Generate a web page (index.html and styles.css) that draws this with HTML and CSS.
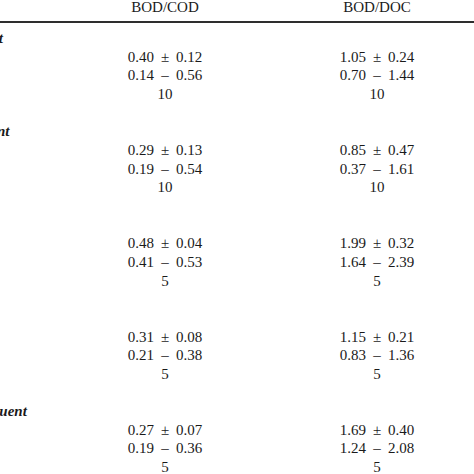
FILE: index.html
```html
<!DOCTYPE html>
<html>
<head>
<meta charset="utf-8">
<link rel="stylesheet" href="styles.css">
</head>
<body>
<div class="page">
  <div class="table">
    <div class="head">
      <div class="hcell"></div>
      <div class="hcell">BOD/COD</div>
      <div class="hcell">BOD/DOC</div>
    </div>
    <div class="body">
      <div class="group">
        <div class="label">Influent</div>
        <div class="spacer"></div>
        <div class="stat"><span>0.40</span><span class="sg">±</span><span>0.12</span><span>0.14</span><span class="sg">–</span><span>0.56</span><span class="n">10</span></div>
        <div class="stat"><span>1.05</span><span class="sg">±</span><span>0.24</span><span>0.70</span><span class="sg">–</span><span>1.44</span><span class="n">10</span></div>
      </div>
      <div class="group">
        <div class="label">Sediment</div>
        <div class="spacer"></div>
        <div class="stat"><span>0.29</span><span class="sg">±</span><span>0.13</span><span>0.19</span><span class="sg">–</span><span>0.54</span><span class="n">10</span></div>
        <div class="stat"><span>0.85</span><span class="sg">±</span><span>0.47</span><span>0.37</span><span class="sg">–</span><span>1.61</span><span class="n">10</span></div>
      </div>
      <div class="group">
        <div class="label">Pond</div>
        <div class="spacer"></div>
        <div class="stat"><span>0.48</span><span class="sg">±</span><span>0.04</span><span>0.41</span><span class="sg">–</span><span>0.53</span><span class="n">5</span></div>
        <div class="stat"><span>1.99</span><span class="sg">±</span><span>0.32</span><span>1.64</span><span class="sg">–</span><span>2.39</span><span class="n">5</span></div>
      </div>
      <div class="group">
        <div class="label">Tank</div>
        <div class="spacer"></div>
        <div class="stat"><span>0.31</span><span class="sg">±</span><span>0.08</span><span>0.21</span><span class="sg">–</span><span>0.38</span><span class="n">5</span></div>
        <div class="stat"><span>1.15</span><span class="sg">±</span><span>0.21</span><span>0.83</span><span class="sg">–</span><span>1.36</span><span class="n">5</span></div>
      </div>
      <div class="group">
        <div class="label">CW effluent</div>
        <div class="spacer"></div>
        <div class="stat"><span>0.27</span><span class="sg">±</span><span>0.07</span><span>0.19</span><span class="sg">–</span><span>0.36</span><span class="n">5</span></div>
        <div class="stat"><span>1.69</span><span class="sg">±</span><span>0.40</span><span>1.24</span><span class="sg">–</span><span>2.08</span><span class="n">5</span></div>
      </div>
    </div>
  </div>
</div>
</body>
</html>
```
FILE: styles.css
```css
html, body {
  margin: 0;
  padding: 0;
  background: #ffffff;
}
.page {
  width: 474px;
  height: 474px;
  overflow: hidden;
  font-family: "Liberation Serif", "Times New Roman", serif;
  font-size: 15px;
  line-height: 18.65px;
  color: #1a1a1a;
}
.table {
  width: 531px;
  margin: -2px 0 0 -48px;
}
.head {
  display: grid;
  grid-template-columns: 107px 212px 212px;
  padding-bottom: 4px;
  border-bottom: 2px solid #2e2e2e;
}
.hcell {
  text-align: center;
}
.body {
  padding-top: 6.4px;
}
.group {
  display: grid;
  grid-template-columns: 107px 212px 212px;
  padding-bottom: 18.65px;
}
.label {
  grid-column: 1 / -1;
  font-weight: bold;
  font-style: italic;
  white-space: nowrap;
}
.stat {
  display: grid;
  grid-template-columns: auto auto auto;
  column-gap: 7px;
  justify-content: center;
}
.sg {
  text-align: center;
}
.n {
  grid-column: 1 / -1;
  text-align: center;
}
```
